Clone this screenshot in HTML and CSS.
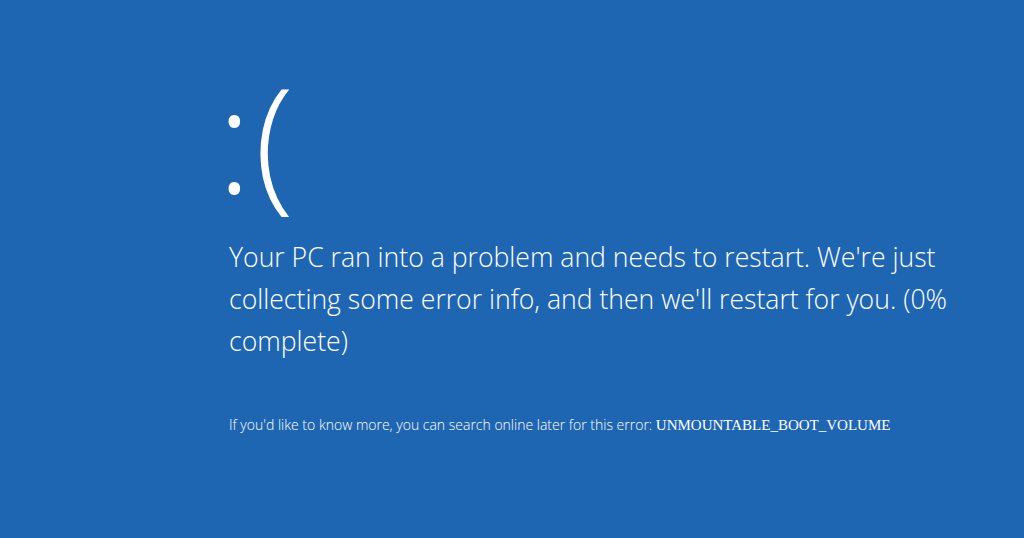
FILE: index.html
```html
<!DOCTYPE html>
<html>
<head>
<meta charset="utf-8">
<link rel="stylesheet" href="styles.css">
</head>
<body>
<main class="screen">
  <div class="face">:(</div>
  <p class="message">Your PC ran into a problem and needs to restart. We're just collecting some error info, and then we'll restart for you. (0% complete)</p>
  <p class="more">If you'd like to know more, you can search online later for this error: <span class="code">UNMOUNTABLE_BOOT_VOLUME</span></p>
</main>
</body>
</html>
```
FILE: styles.css
```css
html, body {
  margin: 0;
  padding: 0;
  background: #1f66b2;
  height: 100%;
  overflow: hidden;
}
.screen {
  padding: 58px 0 0 229px;
  color: #ffffff;
  font-family: "Open Sans", "Noto Sans", sans-serif;
  font-weight: 300;
}
.face {
  font-size: 145px;
  line-height: 160px;
  margin-left: -12px;
  letter-spacing: 3px;
  font-weight: 300;
}
.message {
  margin: 18px 0 0 0;
  width: 740px;
  font-size: 26.6px;
  line-height: 42px;
}
.more {
  margin: 53px 0 0 0;
  font-size: 14px;
  line-height: 20px;
}
.code {
  font-family: "Liberation Serif", serif;
  font-size: 15px;
  font-weight: 400;
}
```
